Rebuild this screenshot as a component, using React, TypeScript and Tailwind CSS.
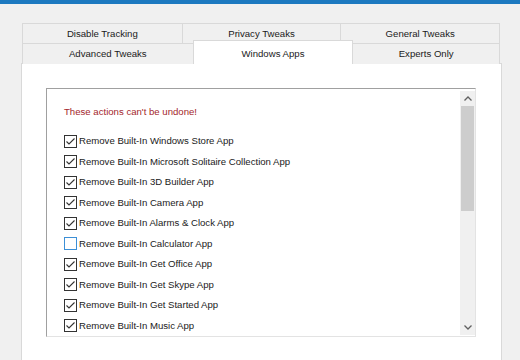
import React from 'react';

const apps = [
  { label: 'Remove Built-In Windows Store App', checked: true },
  { label: 'Remove Built-In Microsoft Solitaire Collection App', checked: true },
  { label: 'Remove Built-In 3D Builder App', checked: true },
  { label: 'Remove Built-In Camera App', checked: true },
  { label: 'Remove Built-In Alarms & Clock App', checked: true },
  { label: 'Remove Built-In Calculator App', checked: false, hover: true },
  { label: 'Remove Built-In Get Office App', checked: true },
  { label: 'Remove Built-In Get Skype App', checked: true },
  { label: 'Remove Built-In Get Started App', checked: true },
  { label: 'Remove Built-In Music App', checked: true },
];

const Check: React.FC<{ checked: boolean; hover?: boolean }> = ({ checked, hover }) => (
  <svg width="13" height="13" viewBox="0 0 13 13" className="shrink-0">
    <rect x="0.5" y="0.5" width="12" height="12" fill="#fff" stroke={hover ? '#3c8fd6' : '#333'} />
    {checked && <path d="M2.5 6.5 L5 9 L10.5 3.5" fill="none" stroke="#333" strokeWidth="1.1" />}
  </svg>
);

const Tab: React.FC<{ label: string; w: string; selected?: boolean }> = ({ label, w, selected }) => (
  <div
    className={`${w} flex items-center justify-center border-l border-t border-r border-[#d9d9d9] ${
      selected ? 'h-[24px] bg-white relative z-10 border-b-0 pt-[3px]' : 'h-[21px] bg-[#f0f0f0]'
    }`}
  >
    {label}
  </div>
);

export default function App() {
  return (
    <div
      className="w-[520px] h-[360px] bg-[#f0f0f0] overflow-hidden text-[9.6px] text-[#1a1a1a]"
      style={{ fontFamily: '"Liberation Sans", Arial, sans-serif' }}
    >
      <div className="h-[4px] bg-[#1c79c0]" />
      <div className="pl-[21px] pt-[19px]">
        {/* Tabs */}
        <div className="ml-[1px] w-[478px]">
          <div className="flex -space-x-px">
            <Tab label="Disable Tracking" w="w-[161px]" />
            <Tab label="Privacy Tweaks" w="w-[160px]" />
            <Tab label="General Tweaks" w="w-[160px]" />
          </div>
          <div className="flex items-end -space-x-px -mt-[4px]">
            <Tab label="Advanced Tweaks" w="w-[172px]" />
            <Tab label="Windows Apps" w="w-[161px]" selected />
            <Tab label="Experts Only" w="w-[148px]" />
          </div>
        </div>

        {/* Panel */}
        <div className="w-[481px] h-[300px] -mt-px bg-white border-l border-r border-t border-[#d9d9d9] pl-[24px] pt-[24px]">
          <div className="w-[430px] h-[249px] flex border-t border-l border-[#a0a0a0] border-r border-b border-r-[#e3e3e3] border-b-[#e3e3e3]">
            <div className="flex-1 pl-[17px] pt-[13px]">
              <div className="h-[20px] flex items-center text-[#a3262b]">These actions can't be undone!</div>
              <div className="mt-[9px] flex flex-col">
                {apps.map(a => (
                  <div key={a.label} className="h-[20.5px] flex items-center gap-[2px]">
                    <Check checked={a.checked} hover={a.hover} />
                    <span>{a.label}</span>
                  </div>
                ))}
              </div>
            </div>
            <div className="w-[15px] mt-[2px] mb-px bg-[#f0f0f0] flex flex-col">
              <div className="h-[15px] flex items-center justify-center">
                <svg width="8" height="5" viewBox="0 0 8 5">
                  <path d="M0.5 4.5 L4 1 L7.5 4.5" fill="none" stroke="#606060" strokeWidth="1.3" />
                </svg>
              </div>
              <div className="h-[105px] mx-px bg-[#cdcdcd]" />
              <div className="flex-1" />
              <div className="h-[15px] flex items-center justify-center">
                <svg width="8" height="5" viewBox="0 0 8 5">
                  <path d="M0.5 0.5 L4 4 L7.5 0.5" fill="none" stroke="#606060" strokeWidth="1.3" />
                </svg>
              </div>
            </div>
          </div>
        </div>
      </div>
    </div>
  );
}
